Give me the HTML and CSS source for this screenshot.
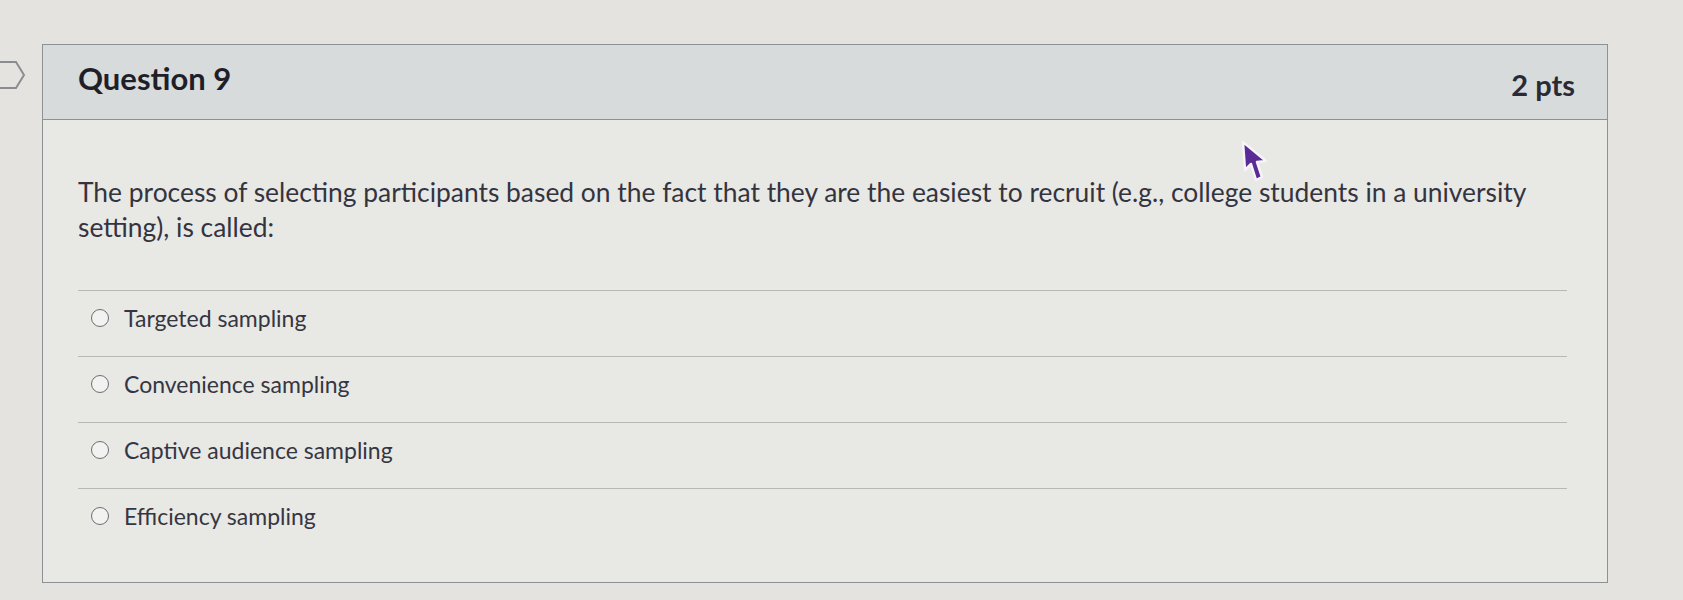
FILE: index.html
```html
<!DOCTYPE html>
<html lang="en">
<head>
<meta charset="utf-8">
<title>Question 9</title>
<link rel="stylesheet" href="styles.css">
</head>
<body>
<div class="page">
  <div class="flag">
    <svg width="26" height="30" viewBox="0 0 26 30"><path d="M-2 2 H16 L24 15 L16 28 H-2" fill="none" stroke="#8a8c90" stroke-width="2"/></svg>
  </div>
  <div class="card">
    <div class="card-header">
      <span class="q-title">Question 9</span>
      <span class="q-pts">2 pts</span>
    </div>
    <div class="card-body">
      <p class="q-text">The process of selecting participants based on the fact that they are the easiest to recruit (e.g., college students in a university setting), is called:</p>
      <div class="answers">
        <label class="answer"><span class="radio"></span><span>Targeted sampling</span></label>
        <label class="answer"><span class="radio"></span><span>Convenience sampling</span></label>
        <label class="answer"><span class="radio"></span><span>Captive audience sampling</span></label>
        <label class="answer"><span class="radio"></span><span>Efficiency sampling</span></label>
      </div>
    </div>
  </div>
  <svg class="cursor" width="32" height="48" viewBox="0 0 32 48"><path d="M4 3 L6 31 L12 25 L17 41 L23 38 L18 23 L27 22 Z" fill="#5a2b96" stroke="#f6f4f8" stroke-width="2.5" stroke-linejoin="round"/></svg>
</div>
</body>
</html>
```
FILE: styles.css
```css
html, body {
  margin: 0;
  padding: 0;
}
body {
  background: #e4e3df;
  font-family: Lato, "Open Sans", sans-serif;
  color: #33333f;
  width: 1683px;
  height: 600px;
  overflow: hidden;
}
.page {
  position: relative;
  display: flex;
  align-items: flex-start;
  padding-top: 44px;
}
.flag {
  width: 42px;
  padding-top: 16px;
  flex: none;
}
.flag svg { display: block; }
.card {
  width: 1566px;
  height: 539px;
  border: 1px solid #8e9194;
  background: #e8e8e5;
  box-sizing: border-box;
  display: flex;
  flex-direction: column;
}
.card-header {
  height: 75px;
  box-sizing: border-box;
  background: #d8dbdb;
  border-bottom: 1px solid #8e9194;
  display: flex;
  align-items: center;
  justify-content: space-between;
  padding: 0 32px 8px 35px;
}
.q-title {
  font-weight: 700;
  font-size: 31px;
  color: #1f1f2a;
}
.q-pts {
  font-weight: 700;
  font-size: 29px;
  color: #2a2a36;
  position: relative;
  top: 6px;
}
.card-body {
  padding: 55px 40px 0 35px;
}
.q-text {
  margin: 0;
  font-size: 26.4px;
  line-height: 35px;
  color: #34343f;
}
.answers {
  margin-top: 45px;
}
.answer {
  display: flex;
  align-items: center;
  gap: 15px;
  height: 66px;
  padding-left: 13px;
  border-top: 1px solid #b8b8b8;
  font-size: 23px;
  color: #363642;
  padding-bottom: 12px;
  box-sizing: border-box;
}
.radio {
  width: 18px;
  height: 18px;
  border: 1.5px solid #6e6e72;
  border-radius: 50%;
  box-sizing: border-box;
  flex: none;
  background: #f2f2f0;
}
.cursor {
  position: absolute;
  left: 1239px;
  top: 139px;
}
```
